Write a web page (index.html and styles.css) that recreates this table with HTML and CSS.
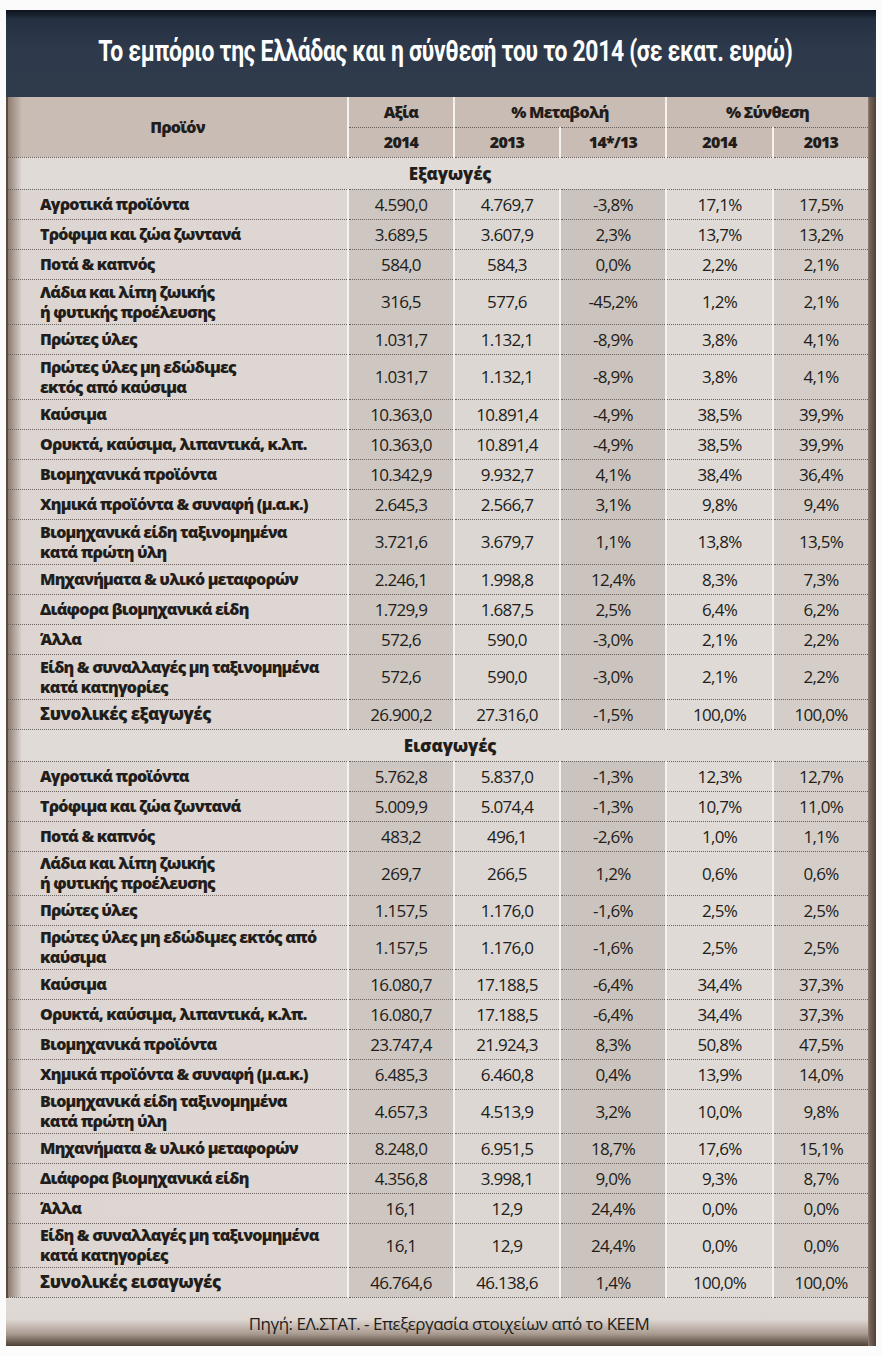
FILE: index.html
```html
<html>
<head>
    <link rel="stylesheet" href="styles.css">
</head>
<body>

<div class="box">

<div class="title"><span>Το εμπόριο της Ελλάδας και η σύνθεσή του το 2014 (σε εκατ. ευρώ)</span></div>

<table class="trade">
    <colgroup>
        <col class="w-prod">
        <col class="w-num">
        <col class="w-num">
        <col class="w-num">
        <col class="w-num2">
        <col class="w-last">
    </colgroup>
    <tr class="head">
        <th rowspan="2" class="prod-h">Προϊόν</th>
        <th class="dotted">Αξία</th>
        <th colspan="2" class="dotted">% Μεταβολή</th>
        <th colspan="2" class="dotted">% Σύνθεση</th>
    </tr>
    <tr class="head">
        <th>2014</th>
        <th>2013</th>
        <th>14*/13</th>
        <th>2014</th>
        <th>2013</th>
    </tr>

    <!-- exports -->
    <tr class="section"><td colspan="6">Εξαγωγές</td></tr>
    <tr><td class="prod">Αγροτικά προϊόντα</td><td class="c1">4.590,0</td><td class="c2">4.769,7</td><td class="c3">-3,8%</td><td class="c4">17,1%</td><td class="c5">17,5%</td></tr>
    <tr><td class="prod">Τρόφιμα και ζώα ζωντανά</td><td class="c1">3.689,5</td><td class="c2">3.607,9</td><td class="c3">2,3%</td><td class="c4">13,7%</td><td class="c5">13,2%</td></tr>
    <tr><td class="prod">Ποτά &amp; καπνός</td><td class="c1">584,0</td><td class="c2">584,3</td><td class="c3">0,0%</td><td class="c4">2,2%</td><td class="c5">2,1%</td></tr>
    <tr class="tall"><td class="prod">Λάδια και λίπη ζωικής<br>ή φυτικής προέλευσης</td><td class="c1">316,5</td><td class="c2">577,6</td><td class="c3">-45,2%</td><td class="c4">1,2%</td><td class="c5">2,1%</td></tr>
    <tr><td class="prod">Πρώτες ύλες</td><td class="c1">1.031,7</td><td class="c2">1.132,1</td><td class="c3">-8,9%</td><td class="c4">3,8%</td><td class="c5">4,1%</td></tr>
    <tr class="tall"><td class="prod">Πρώτες ύλες μη εδώδιμες<br>εκτός από καύσιμα</td><td class="c1">1.031,7</td><td class="c2">1.132,1</td><td class="c3">-8,9%</td><td class="c4">3,8%</td><td class="c5">4,1%</td></tr>
    <tr><td class="prod">Καύσιμα</td><td class="c1">10.363,0</td><td class="c2">10.891,4</td><td class="c3">-4,9%</td><td class="c4">38,5%</td><td class="c5">39,9%</td></tr>
    <tr><td class="prod">Ορυκτά, καύσιμα, λιπαντικά, κ.λπ.</td><td class="c1">10.363,0</td><td class="c2">10.891,4</td><td class="c3">-4,9%</td><td class="c4">38,5%</td><td class="c5">39,9%</td></tr>
    <tr><td class="prod">Βιομηχανικά προϊόντα</td><td class="c1">10.342,9</td><td class="c2">9.932,7</td><td class="c3">4,1%</td><td class="c4">38,4%</td><td class="c5">36,4%</td></tr>
    <tr><td class="prod">Χημικά προϊόντα &amp; συναφή (μ.α.κ.)</td><td class="c1">2.645,3</td><td class="c2">2.566,7</td><td class="c3">3,1%</td><td class="c4">9,8%</td><td class="c5">9,4%</td></tr>
    <tr class="tall"><td class="prod">Βιομηχανικά είδη ταξινομημένα<br>κατά πρώτη ύλη</td><td class="c1">3.721,6</td><td class="c2">3.679,7</td><td class="c3">1,1%</td><td class="c4">13,8%</td><td class="c5">13,5%</td></tr>
    <tr><td class="prod">Μηχανήματα &amp; υλικό μεταφορών</td><td class="c1">2.246,1</td><td class="c2">1.998,8</td><td class="c3">12,4%</td><td class="c4">8,3%</td><td class="c5">7,3%</td></tr>
    <tr><td class="prod">Διάφορα βιομηχανικά είδη</td><td class="c1">1.729,9</td><td class="c2">1.687,5</td><td class="c3">2,5%</td><td class="c4">6,4%</td><td class="c5">6,2%</td></tr>
    <tr><td class="prod">Άλλα</td><td class="c1">572,6</td><td class="c2">590,0</td><td class="c3">-3,0%</td><td class="c4">2,1%</td><td class="c5">2,2%</td></tr>
    <tr class="tall"><td class="prod">Είδη &amp; συναλλαγές μη ταξινομημένα<br>κατά κατηγορίες</td><td class="c1">572,6</td><td class="c2">590,0</td><td class="c3">-3,0%</td><td class="c4">2,1%</td><td class="c5">2,2%</td></tr>
    <tr class="total"><td class="prod">Συνολικές εξαγωγές</td><td class="c1">26.900,2</td><td class="c2">27.316,0</td><td class="c3">-1,5%</td><td class="c4">100,0%</td><td class="c5">100,0%</td></tr>

    <!-- imports -->
    <tr class="section"><td colspan="6">Εισαγωγές</td></tr>
    <tr><td class="prod">Αγροτικά προϊόντα</td><td class="c1">5.762,8</td><td class="c2">5.837,0</td><td class="c3">-1,3%</td><td class="c4">12,3%</td><td class="c5">12,7%</td></tr>
    <tr><td class="prod">Τρόφιμα και ζώα ζωντανά</td><td class="c1">5.009,9</td><td class="c2">5.074,4</td><td class="c3">-1,3%</td><td class="c4">10,7%</td><td class="c5">11,0%</td></tr>
    <tr><td class="prod">Ποτά &amp; καπνός</td><td class="c1">483,2</td><td class="c2">496,1</td><td class="c3">-2,6%</td><td class="c4">1,0%</td><td class="c5">1,1%</td></tr>
    <tr class="tall imp"><td class="prod">Λάδια και λίπη ζωικής<br>ή φυτικής προέλευσης</td><td class="c1">269,7</td><td class="c2">266,5</td><td class="c3">1,2%</td><td class="c4">0,6%</td><td class="c5">0,6%</td></tr>
    <tr><td class="prod">Πρώτες ύλες</td><td class="c1">1.157,5</td><td class="c2">1.176,0</td><td class="c3">-1,6%</td><td class="c4">2,5%</td><td class="c5">2,5%</td></tr>
    <tr class="tall imp"><td class="prod">Πρώτες ύλες μη εδώδιμες εκτός από<br>καύσιμα</td><td class="c1">1.157,5</td><td class="c2">1.176,0</td><td class="c3">-1,6%</td><td class="c4">2,5%</td><td class="c5">2,5%</td></tr>
    <tr><td class="prod">Καύσιμα</td><td class="c1">16.080,7</td><td class="c2">17.188,5</td><td class="c3">-6,4%</td><td class="c4">34,4%</td><td class="c5">37,3%</td></tr>
    <tr><td class="prod">Ορυκτά, καύσιμα, λιπαντικά, κ.λπ.</td><td class="c1">16.080,7</td><td class="c2">17.188,5</td><td class="c3">-6,4%</td><td class="c4">34,4%</td><td class="c5">37,3%</td></tr>
    <tr><td class="prod">Βιομηχανικά προϊόντα</td><td class="c1">23.747,4</td><td class="c2">21.924,3</td><td class="c3">8,3%</td><td class="c4">50,8%</td><td class="c5">47,5%</td></tr>
    <tr><td class="prod">Χημικά προϊόντα &amp; συναφή (μ.α.κ.)</td><td class="c1">6.485,3</td><td class="c2">6.460,8</td><td class="c3">0,4%</td><td class="c4">13,9%</td><td class="c5">14,0%</td></tr>
    <tr class="tall imp"><td class="prod">Βιομηχανικά είδη ταξινομημένα<br>κατά πρώτη ύλη</td><td class="c1">4.657,3</td><td class="c2">4.513,9</td><td class="c3">3,2%</td><td class="c4">10,0%</td><td class="c5">9,8%</td></tr>
    <tr><td class="prod">Μηχανήματα &amp; υλικό μεταφορών</td><td class="c1">8.248,0</td><td class="c2">6.951,5</td><td class="c3">18,7%</td><td class="c4">17,6%</td><td class="c5">15,1%</td></tr>
    <tr><td class="prod">Διάφορα βιομηχανικά είδη</td><td class="c1">4.356,8</td><td class="c2">3.998,1</td><td class="c3">9,0%</td><td class="c4">9,3%</td><td class="c5">8,7%</td></tr>
    <tr><td class="prod">Άλλα</td><td class="c1">16,1</td><td class="c2">12,9</td><td class="c3">24,4%</td><td class="c4">0,0%</td><td class="c5">0,0%</td></tr>
    <tr class="tall imp"><td class="prod">Είδη &amp; συναλλαγές μη ταξινομημένα<br>κατά κατηγορίες</td><td class="c1">16,1</td><td class="c2">12,9</td><td class="c3">24,4%</td><td class="c4">0,0%</td><td class="c5">0,0%</td></tr>
    <tr class="total"><td class="prod">Συνολικές εισαγωγές</td><td class="c1">46.764,6</td><td class="c2">46.138,6</td><td class="c3">1,4%</td><td class="c4">100,0%</td><td class="c5">100,0%</td></tr>
</table>

<div class="source">Πηγή: ΕΛ.ΣΤΑΤ. - Επεξεργασία στοιχείων από το ΚΕΕΜ</div>

</div>

</body>
</html>
```

FILE: styles.css
```css
body {
    margin: 0;
    background-color: #fbfbfb;
    font-family: "Open Sans", sans-serif;
    color: #221d1a;
}

.box {
    width: 870px;
    margin: 10px 0 0 6px;
    background: linear-gradient(to right, #5a4a40 0, #5a4a40 2px, #ddd6d2 3px, #ddd6d2 860px, #7a685c 863px, #4f4038 870px);
}

.title {
    height: 87px;
    background: linear-gradient(#0c131d 0, #253142 10px, #2e3a4b 40px, #2f3b4b 100%);
    color: #ffffff;
    text-align: center;
    line-height: 82px;
    overflow: hidden;
}
.title span {
    display: inline-block;
    font-family: "Roboto", sans-serif;
    font-weight: bold;
    font-size: 29px;
    letter-spacing: -0.4px;
    transform: scaleX(0.79);
    white-space: nowrap;
}

.trade {
    border-collapse: collapse;
    table-layout: fixed;
    width: 860px;
    margin-left: 2px;
}
.w-prod { width: 340px; }
.w-num { width: 106px; }
.w-num2 { width: 107px; }
.w-last { width: 95px; }

.trade th, .trade td {
    padding: 0;
    height: 30px;
    text-align: center;
    border-bottom: 1px dotted #6a625d;
    border-left: 2px solid #f4f1ee;
}
.trade th {
    background-color: #c8bcb4;
    font-weight: 800;
    font-size: 16px;
    letter-spacing: -0.8px;
}
.trade th.prod-h {
    border-left: none;
    background: linear-gradient(to right, #8f7d71 0, #c8bcb4 14px);
}
.trade td {
    font-size: 17px;
    letter-spacing: -0.7px;
}

.section td {
    height: 32px;
    border-left: none;
    background: linear-gradient(to right, #8f7f75 0, #e1dbd7 14px);
    font-weight: 800;
    letter-spacing: -0.2px;
    padding-left: 24px;
}

.trade td.prod {
    border-left: none;
    text-align: left;
    padding-left: 32px;
    font-weight: 800;
    font-size: 16px;
    letter-spacing: -0.8px;
    line-height: 20px;
    background: linear-gradient(to right, #8a796e 0, #dcd5d1 14px, #ddd6d2 100%);
}
.tall td { height: 45px; }
.imp td { height: 44px; }
.total td.prod { font-size: 17px; letter-spacing: -0.5px; }

.c1 { background-color: #cec6c0; }
.c2 { background-color: #dcd7d3; }
.c3 { background-color: #cbc3bd; }
.c4 { background-color: #dfdad6; }
.c5 { background-color: #d4cdc8; }

.source {
    height: 48px;
    margin-right: 8px;
    background: linear-gradient(#e0dad6 0, #ddd6d1 45%, #a99a90 75%, #4e3f36 100%);
    text-align: center;
    padding-left: 24px;
    font-size: 17px;
    letter-spacing: -0.5px;
    line-height: 52px;
}
```
